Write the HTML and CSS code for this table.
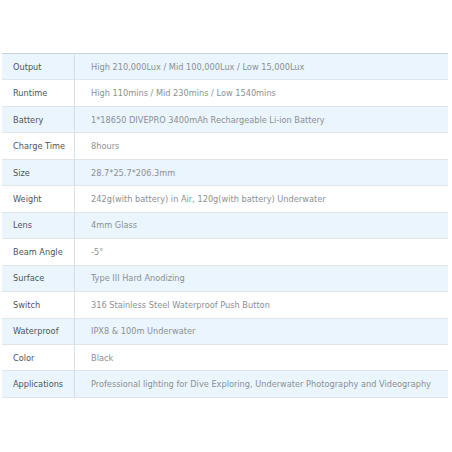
FILE: index.html
```html
<!DOCTYPE html>
<html>
<head>
<meta charset="utf-8">
<link rel="stylesheet" href="styles.css">
</head>
<body>
<table class="spec">
<tbody>
<tr class="alt"><th>Output</th><td>High 210,000Lux / Mid 100,000Lux / Low 15,000Lux</td></tr>
<tr><th>Runtime</th><td>High 110mins / Mid 230mins / Low 1540mins</td></tr>
<tr class="alt"><th>Battery</th><td>1*18650 DIVEPRO 3400mAh Rechargeable Li-ion Battery</td></tr>
<tr><th>Charge Time</th><td>8hours</td></tr>
<tr class="alt"><th>Size</th><td>28.7*25.7*206.3mm</td></tr>
<tr><th>Weight</th><td>242g(with battery) in Air, 120g(with battery) Underwater</td></tr>
<tr class="alt"><th>Lens</th><td>4mm Glass</td></tr>
<tr><th>Beam Angle</th><td>-5°</td></tr>
<tr class="alt"><th>Surface</th><td>Type III Hard Anodizing</td></tr>
<tr><th>Switch</th><td>316 Stainless Steel Waterproof Push Button</td></tr>
<tr class="alt"><th>Waterproof</th><td>IPX8 &amp; 100m Underwater</td></tr>
<tr><th>Color</th><td>Black</td></tr>
<tr class="alt"><th>Applications</th><td>Professional lighting for Dive Exploring, Underwater Photography and Videography</td></tr>
</tbody>
</table>
</body>
</html>
```
FILE: styles.css
```css
html, body {
  margin: 0;
  padding: 0;
  background: #ffffff;
}
.spec {
  margin: 53px 0 0 2px;
  width: 446px;
  border-collapse: collapse;
  border-top: 1px solid #c9d3dc;
  font-family: "DejaVu Sans Condensed", "Liberation Sans", sans-serif;
  font-size: 9.15px;
}
.spec tr {
  height: 26.46px;
  border-bottom: 1px solid #e0e5ea;
  background: #ffffff;
}
.spec tr.alt {
  background: #eaf5fd;
}
.spec th {
  width: 61px;
  padding: 0 0 0 11px;
  text-align: left;
  font-weight: normal;
  color: #4f555a;
  border-right: 1px solid #d9dfe4;
  white-space: nowrap;
}
.spec td {
  padding: 0 0 0 16px;
  color: #8b9095;
  white-space: nowrap;
}
```
